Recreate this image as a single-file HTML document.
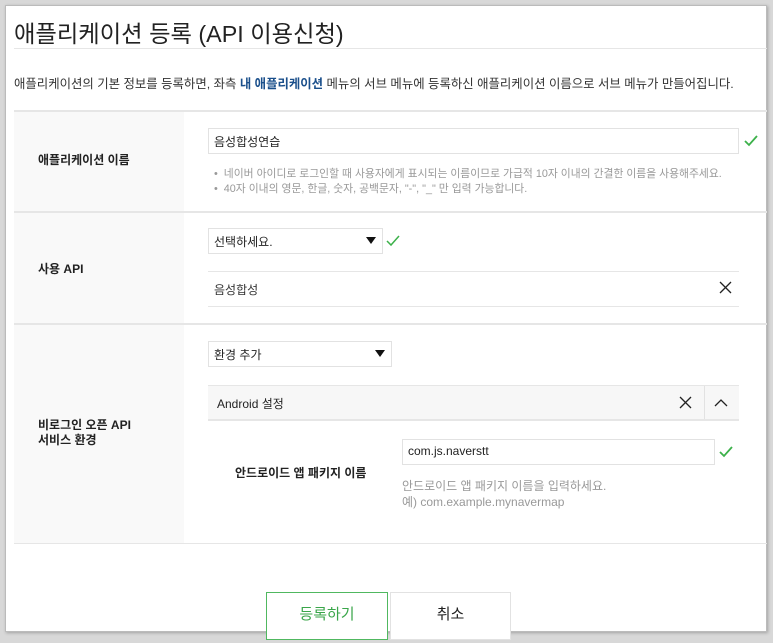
<!DOCTYPE html>
<html><head><meta charset="utf-8"><style>
*{margin:0;padding:0;box-sizing:border-box}
body{width:773px;height:643px;background:#d8d8d8;position:relative;overflow:hidden;font-family:"Liberation Sans","Noto Sans CJK KR",sans-serif;color:#222}
.frame{position:absolute;left:5px;top:5px;width:762px;height:627px;background:#fff;border:1px solid #bbb;box-shadow:1px 1px 3px rgba(0,0,0,.25)}
.a{position:absolute;white-space:nowrap}
.box{position:absolute;border:1px solid #e2e2e2;background:#fff}
.lbl{position:absolute;left:14px;width:170px;background:#f9f9f9}
.hl{position:absolute;height:1px;background:#e6e6e6}
.chk{position:absolute;width:14px;height:12px}
.tri{position:absolute;width:0;height:0;border-left:5px solid transparent;border-right:5px solid transparent;border-top:7px solid #111}
.hint{font-size:10.8px;color:#999}
</style></head><body>
<div class="frame"></div>
<div class="a" style="left:14px;top:15px;font-size:23.3px;color:#222">애플리케이션 등록 (API 이용신청)</div>
<div class="hl" style="left:14px;top:48px;width:753px"></div>
<div class="a" style="left:14px;top:74px;font-size:12.4px;color:#333">애플리케이션의 기본 정보를 등록하면, 좌측 <b style="color:#1a4f8b;font-weight:bold">내 애플리케이션</b> 메뉴의 서브 메뉴에 등록하신 애플리케이션 이름으로 서브 메뉴가 만들어집니다.</div>

<div class="hl" style="left:14px;top:110px;width:753px;height:2px"></div>
<div class="lbl" style="top:112px;height:99px"></div>
<div class="hl" style="left:14px;top:211px;width:753px;height:2px"></div>
<div class="lbl" style="top:213px;height:110px"></div>
<div class="hl" style="left:14px;top:323px;width:753px;height:2px"></div>
<div class="lbl" style="top:325px;height:218px"></div>
<div class="hl" style="left:14px;top:543px;width:753px"></div>

<div class="a" style="left:38px;top:151px;font-size:12px;font-weight:bold">애플리케이션 이름</div>
<div class="box" style="left:208px;top:128px;width:531px;height:26px"></div>
<div class="a" style="left:214px;top:133px;font-size:12px">음성합성연습</div>
<svg class="chk" style="left:744px;top:135px" viewBox="0 0 14 12"><path d="M1 6l4 4 8-9" fill="none" stroke="#3cb14a" stroke-width="1.8"/></svg>
<div class="a hint" style="left:214px;top:165px">•&nbsp; 네이버 아이디로 로그인할 때 사용자에게 표시되는 이름이므로 가급적 10자 이내의 간결한 이름을 사용해주세요.</div>
<div class="a hint" style="left:214px;top:180px">•&nbsp; 40자 이내의 영문, 한글, 숫자, 공백문자, "-", "_" 만 입력 가능합니다.</div>

<div class="a" style="left:38px;top:260px;font-size:12px;font-weight:bold">사용 API</div>
<div class="box" style="left:208px;top:228px;width:175px;height:26px"></div>
<div class="a" style="left:214px;top:233px;font-size:12px">선택하세요.</div>
<div class="tri" style="left:366px;top:237px"></div>
<svg class="chk" style="left:386px;top:235px" viewBox="0 0 14 12"><path d="M1 6l4 4 8-9" fill="none" stroke="#3cb14a" stroke-width="1.5"/></svg>
<div class="hl" style="left:208px;top:271px;width:531px"></div>
<div class="hl" style="left:208px;top:306px;width:531px"></div>
<div class="a" style="left:214px;top:281px;font-size:12px;color:#333">음성합성</div>
<svg style="position:absolute;left:719px;top:281px" width="13" height="13" viewBox="0 0 13 13"><path d="M1 1l11 11M12 1L1 12" stroke="#222" stroke-width="1.3"/></svg>

<div class="a" style="left:38px;top:418px;font-size:12px;font-weight:bold;line-height:15px">비로그인 오픈 API<br>서비스 환경</div>
<div class="box" style="left:208px;top:341px;width:184px;height:26px"></div>
<div class="a" style="left:214px;top:346px;font-size:12px">환경 추가</div>
<div class="tri" style="left:375px;top:350px"></div>

<div class="a" style="left:208px;top:385px;width:531px;height:36px;background:#f7f7f7;border-top:1px solid #e6e6e6;border-bottom:2px solid #e6e6e6"></div>
<div class="a" style="left:704px;top:386px;width:1px;height:33px;background:#e2e2e2"></div>
<div class="a" style="left:217px;top:395px;font-size:12px">Android 설정</div>
<svg style="position:absolute;left:679px;top:396px" width="13" height="13" viewBox="0 0 13 13"><path d="M1 1l11 11M12 1L1 12" stroke="#222" stroke-width="1.3"/></svg>
<svg style="position:absolute;left:714px;top:398px" width="14" height="9" viewBox="0 0 14 9"><path d="M1 8l6-6 6 6" fill="none" stroke="#222" stroke-width="1.3"/></svg>

<div class="a" style="left:235px;top:464px;font-size:12px;font-weight:bold">안드로이드 앱 패키지 이름</div>
<div class="box" style="left:402px;top:439px;width:313px;height:26px"></div>
<div class="a" style="left:408px;top:444px;font-size:12px">com.js.naverstt</div>
<svg class="chk" style="left:719px;top:446px" viewBox="0 0 14 12"><path d="M1 6l4 4 8-9" fill="none" stroke="#3cb14a" stroke-width="1.8"/></svg>
<div class="a hint" style="left:402px;top:477px;font-size:12px">안드로이드 앱 패키지 이름을 입력하세요.</div>
<div class="a hint" style="left:402px;top:493px;font-size:12px">예) com.example.mynavermap</div>

<div class="a" style="left:266px;top:592px;width:122px;height:48px;border:1px solid #50b860;background:#fff;color:#3aa64a;font-size:15px;text-align:center;line-height:44px">등록하기</div>
<div class="a" style="left:390px;top:592px;width:121px;height:48px;border:1px solid #e2e2e2;background:#fff;color:#222;font-size:15px;text-align:center;line-height:44px">취소</div>
</body></html>
